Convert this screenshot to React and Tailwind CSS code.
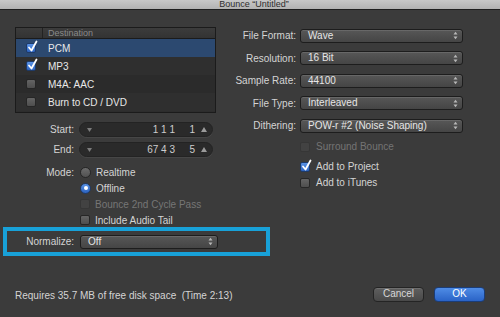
import React from 'react';

function Arrows() {
  return (
    <svg width="5" height="9" viewBox="0 0 5 9" className="shrink-0">
      <path d="M0.5 3.5 L2.5 0.8 L4.5 3.5 Z" fill="#b8b8b8" />
      <path d="M0.5 5.5 L2.5 8.2 L4.5 5.5 Z" fill="#b8b8b8" />
    </svg>
  );
}

function Select({ value, width = 'w-[163px]' }) {
  return (
    <div className={`flex h-[14px] ${width} items-center justify-between rounded-[3px] border border-[#1d1d1d] bg-gradient-to-b from-[#575757] to-[#454545] pl-[7px] pr-[4px] text-[10px] leading-none text-[#e6e6e6] shadow-[inset_0_1px_0_rgba(255,255,255,0.1)]`}>
      <span>{value}</span>
      <Arrows />
    </div>
  );
}

function Check({ checked, disabled }) {
  if (checked) {
    return (
      <div className="relative h-[10px] w-[10px] shrink-0 rounded-[2px] border border-[#1e3a68] bg-gradient-to-b from-[#5a93e6] to-[#2c62bd]">
        <svg width="12" height="13" viewBox="0 0 12 13" className="absolute left-[0px] top-[-4px]">
          <path d="M2 7.5 L4.5 10.5 L9.5 1.5" stroke="#ffffff" strokeWidth="1.8" fill="none" strokeLinecap="round" strokeLinejoin="round" />
        </svg>
      </div>
    );
  }
  return (
    <div className={`h-[10px] w-[10px] shrink-0 rounded-[2px] border ${disabled ? 'border-[#333] bg-[#4a4a4a] opacity-50' : 'border-[#262626] bg-gradient-to-b from-[#646464] to-[#4e4e4e]'}`} />
  );
}

function Radio({ checked }) {
  if (checked) {
    return (
      <div className="flex h-[11px] w-[11px] shrink-0 items-center justify-center rounded-full border border-[#1e3a68] bg-gradient-to-b from-[#5a93e6] to-[#2c62bd]">
        <div className="h-[4px] w-[4px] rounded-full bg-white" />
      </div>
    );
  }
  return <div className="h-[11px] w-[11px] shrink-0 rounded-full border border-[#262626] bg-gradient-to-b from-[#6c6c6c] to-[#515151]" />;
}

function Field({ main, last }) {
  return (
    <div className="flex h-[15px] w-[134px] items-center rounded-full border border-[#232323] bg-[#2a2a2a] pl-[7px] pr-[5px] text-[10px] leading-none text-[#cdcdcd] shadow-[0_1px_0_rgba(255,255,255,0.06)]">
      <svg width="5" height="4" viewBox="0 0 5 4"><path d="M0 0 L5 0 L2.5 4 Z" fill="#7c7c7c" /></svg>
      <span className="ml-auto">{main}</span>
      <span className="w-[20px] text-right">{last}</span>
      <svg width="6" height="5" viewBox="0 0 6 5" className="ml-[6px]"><path d="M0 5 L6 5 L3 0 Z" fill="#9a9a9a" /></svg>
    </div>
  );
}

const destinations = [
  { name: 'PCM', checked: true, selected: true },
  { name: 'MP3', checked: true },
  { name: 'M4A: AAC', checked: false },
  { name: 'Burn to CD / DVD', checked: false },
];

const rightRows = [
  ['File Format:', 'Wave'],
  ['Resolution:', '16 Bit'],
  ['Sample Rate:', '44100'],
  ['File Type:', 'Interleaved'],
  ['Dithering:', 'POW-r #2 (Noise Shaping)'],
];

export default function App() {
  return (
    <div className="flex h-[317px] w-[500px] flex-col overflow-hidden bg-[#3b3b3b] font-['Liberation_Sans',Arial,sans-serif] text-[10px] text-[#d4d4d4]">
      <div className="h-[9px] shrink-0 overflow-hidden bg-gradient-to-b from-[#c8c8c8] to-[#b2b2b2] pl-[8px] text-center text-[9px] leading-[9px] text-[#2e2e2e]">
        Bounce “Untitled”
      </div>
      <div className="h-px shrink-0 bg-[#202020]" />

      <div className="flex pl-[15px]">
        {/* left column */}
        <div className="flex w-[201px] flex-col">
          <div className="mt-[17px] h-[86px] border border-[#1b1b1b] bg-[#2d2d2d]">
            <div className="flex h-[11px] border-b border-[#1b1b1b] bg-gradient-to-b from-[#3c3c3c] to-[#333333] text-[9px] leading-[10px] text-[#8a8a8a]">
              <div className="w-[27px] border-r border-[#222]" />
              <div className="pl-[5px]">Destination</div>
            </div>
            {destinations.map((d, i) => (
              <div
                key={d.name}
                className={`flex h-[18px] items-center ${d.selected ? 'bg-[#2c4970]' : i % 2 === 1 ? 'bg-[#2f2f2f]' : 'bg-[#2b2b2b]'}`}
              >
                <div className="flex w-[28px] justify-center pl-[1px]">
                  <Check checked={d.checked} />
                </div>
                <span className="pl-[4px] text-[#e8e8e8]">{d.name}</span>
              </div>
            ))}
          </div>

          <div className="mt-[9px] flex items-center gap-[5px]">
            <span className="w-[59px] text-right">Start:</span>
            <Field main="1 1 1" last="1" />
          </div>
          <div className="mt-[5px] flex items-center gap-[5px]">
            <span className="w-[59px] text-right">End:</span>
            <Field main="67 4 3" last="5" />
          </div>

          <div className="mt-[7px] flex h-[16px] items-center">
            <span className="w-[59px] text-right">Mode:</span>
            <div className="ml-[6px] flex items-center gap-[5px]">
              <Radio />
              <span>Realtime</span>
            </div>
          </div>
          <div className="flex h-[16px] items-center pl-[65px] gap-[5px]">
            <Radio checked />
            <span>Offline</span>
          </div>
          <div className="flex h-[16px] items-center pl-[65px] gap-[5px]">
            <Check disabled />
            <span className="text-[#767676]">Bounce 2nd Cycle Pass</span>
          </div>
          <div className="flex h-[16px] items-center pl-[65px] gap-[5px]">
            <Check />
            <span>Include Audio Tail</span>
          </div>

          <div className="-ml-[12px] mt-[-1px] flex h-[29px] w-[267px] shrink-0 items-center border-[4px] border-[#18a1d8] pl-[8px]">
            <span className="w-[59px] text-right">Normalize:</span>
            <div className="ml-[6px]">
              <Select value="Off" width="w-[138px]" />
            </div>
          </div>
        </div>

        {/* right column */}
        <div className="ml-[10px] flex flex-col">
          <div className="mt-[18px] flex flex-col gap-[7.5px]">
            {rightRows.map(([label, value]) => (
              <div key={label} className="flex items-center gap-[4px]">
                <span className="w-[70px] text-right">{label}</span>
                <Select value={value} />
              </div>
            ))}
          </div>
          <div className="mt-[5.5px] flex h-[16px] items-center gap-[6px] pl-[74px]">
            <Check disabled />
            <span className="text-[#747474]">Surround Bounce</span>
          </div>
          <div className="mt-[4px] flex h-[16px] items-center gap-[6px] pl-[74px]">
            <Check checked />
            <span>Add to Project</span>
          </div>
          <div className="flex h-[16px] items-center gap-[6px] pl-[74px]">
            <Check />
            <span>Add to iTunes</span>
          </div>
        </div>
      </div>

      <div className="mt-auto flex items-center px-[15px] pb-[14px]">
        <span className="mt-[3px]">Requires 35.7 MB of free disk space&nbsp; (Time 2:13)</span>
        <div className="ml-auto flex gap-[10px]">
          <button className="h-[15px] w-[51px] rounded-[4px] border border-[#242424] bg-gradient-to-b from-[#5f5f5f] to-[#494949] text-[10px] leading-none text-[#d8d8d8] shadow-[inset_0_1px_0_rgba(255,255,255,0.1)]">
            Cancel
          </button>
          <button className="h-[15px] w-[51px] rounded-[4px] border border-[#1b3d78] bg-gradient-to-b from-[#4f8ce6] to-[#2a63c6] text-[10px] leading-none text-white">
            OK
          </button>
        </div>
      </div>
    </div>
  );
}
